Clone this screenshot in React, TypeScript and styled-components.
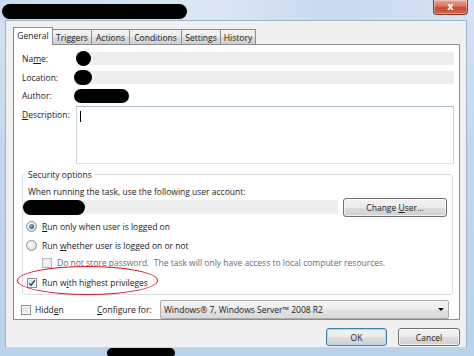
import React from "react";
import styled, { createGlobalStyle } from "styled-components";

const Global = createGlobalStyle`
  html, body { margin: 0; padding: 0; }
  body { font-family: "Open Sans", "Noto Sans", sans-serif; font-size: 8.5px; color: #1b1b1b; }
  * { box-sizing: border-box; }
`;

const Frame = styled.div`
  position: relative;
  width: 474px;
  height: 356px;
  overflow: hidden;
  display: flex;
  flex-direction: column;
  background: linear-gradient(to bottom, #d4e3f3 0%, #c3d8ee 40%, #b9d1ea 100%);
`;

const TitleBar = styled.div`
  height: 20px;
  flex: none;
  display: flex;
  align-items: flex-start;
  justify-content: space-between;
  padding: 0 6px 0 2px;
  background: linear-gradient(to right, #c9dbef 0%, #dbe7f5 45%, #c7daee 70%, #d5e3f3 100%);
`;

const Redaction = styled.div<{ $w: number; $h: number; $mt?: number }>`
  width: ${(p) => p.$w}px;
  height: ${(p) => p.$h}px;
  margin-top: ${(p) => p.$mt ?? 0}px;
  background: #000;
  border-radius: ${(p) => p.$h / 2}px;
  flex: none;
`;

const CloseButton = styled.div`
  width: 35px;
  height: 15px;
  border: 1px solid #8c3a2e;
  border-top: none;
  border-radius: 0 0 4px 4px;
  background: linear-gradient(to bottom, #e9a99b 0%, #d7725d 45%, #c44a2f 55%, #d2664b 100%);
  color: #fff;
  font-family: "DejaVu Sans", sans-serif;
  font-weight: bold;
  font-size: 10px;
  line-height: 13px;
  text-align: center;
  box-shadow: inset 0 0 0 1px rgba(255, 255, 255, 0.35);
`;

const Client = styled.div`
  height: 328px;
  flex: none;
  margin: 0 7px 0 5px;
  background: #f0f0f0;
  border: 1px solid #9eb4cc;
  border-bottom-color: #c8d6e6;
  padding: 6px 6px 0 7px;
  display: flex;
  flex-direction: column;
`;

const TabStrip = styled.div`
  display: flex;
  align-items: flex-end;
  height: 18px;
`;

const Tab = styled.div<{ $active?: boolean; $w: number }>`
  width: ${(p) => p.$w}px;
  height: ${(p) => (p.$active ? 18 : 16)}px;
  border: 1px solid #898c95;
  border-bottom: ${(p) => (p.$active ? "none" : "1px solid #898c95")};
  margin-left: ${(p) => (p.$active ? 0 : -1)}px;
  background: ${(p) =>
    p.$active ? "#fff" : "linear-gradient(to bottom, #f3f3f3 0%, #ebebeb 50%, #dddddd 51%, #cfcfcf 100%)"};
  display: flex;
  align-items: center;
  justify-content: center;
  position: relative;
  z-index: ${(p) => (p.$active ? 2 : 1)};
  padding-bottom: ${(p) => (p.$active ? 2 : 0)}px;
  &:first-child { margin-left: 0; }
`;

const Panel = styled.div`
  width: 447px;
  height: 276px;
  margin-top: -1px;
  border: 1px solid #898c95;
  background: #fff;
  padding: 6px 5px 0 8px;
  display: flex;
  flex-direction: column;
`;

const FieldRow = styled.div<{ $mt: number; $h: number }>`
  display: flex;
  align-items: center;
  height: ${(p) => p.$h}px;
  margin-top: ${(p) => p.$mt}px;
`;

const Label = styled.div`
  width: 54px;
  flex: none;
  white-space: nowrap;
`;

const ReadOnly = styled.div`
  flex: 1;
  height: 100%;
  background: #eeeeee;
  display: flex;
  align-items: center;
`;

const DescRow = styled.div`
  display: flex;
  margin-top: 4px;
  height: 58px;
`;

const DescLabel = styled(Label)`
  padding-top: 3px;
`;

const TextArea = styled.div`
  flex: 1;
  height: 100%;
  border: 1px solid #e2e3ea;
  border-top-color: #a7b7c9;
  border-left-color: #c9d3de;
  border-right-color: #c9d3de;
  background: #fff;
  padding: 4px 3px;
`;

const Caret = styled.div`
  width: 1px;
  height: 11px;
  background: #000;
`;

const Group = styled.fieldset`
  margin: 5px 1px 0 0;
  padding: 0;
  min-width: 0;
  height: 127px;
  border: 1px solid #d5dfe5;
  border-radius: 3px;
  display: flex;
  flex-direction: column;
`;

const Legend = styled.legend`
  margin-left: 3px;
  padding: 0 2px;
  line-height: 12px;
`;

const GroupText = styled.div`
  margin: 5px 0 0 5px;
  white-space: nowrap;
`;

const AccountRow = styled.div`
  display: flex;
  align-items: center;
  margin-top: 1px;
  height: 19px;
  padding-right: 5px;
`;

const AccountField = styled.div`
  width: 315px;
  height: 14px;
  background: #eeeeee;
  display: flex;
  align-items: center;
`;

const Button = styled.div<{ $w: number; $default?: boolean }>`
  width: ${(p) => p.$w}px;
  height: 19px;
  margin-left: auto;
  border: 1px solid ${(p) => (p.$default ? "#3c7fb1" : "#707070")};
  border-radius: 3px;
  background: linear-gradient(to bottom, #f2f2f2 0%, #ebebeb 50%, #dddddd 51%, #cfcfcf 100%);
  box-shadow: inset 0 0 0 1px ${(p) => (p.$default ? "#a9dcf4" : "rgba(255,255,255,0.7)")};
  display: flex;
  align-items: center;
  justify-content: center;
  flex: none;
  white-space: nowrap;
`;

const OptionRow = styled.div<{ $mt: number; $indent: number; $disabled?: boolean }>`
  display: flex;
  align-items: center;
  height: 12px;
  margin-top: ${(p) => p.$mt}px;
  padding-left: ${(p) => p.$indent}px;
  gap: 5px;
  color: ${(p) => (p.$disabled ? "#6d6d6d" : "inherit")};
  white-space: nowrap;
`;

const Radio = styled.div<{ $on?: boolean }>`
  width: 11px;
  height: 11px;
  border-radius: 50%;
  border: 1px solid #8e8f8f;
  background: radial-gradient(circle at 40% 35%, #ffffff 0%, #e3e3e3 60%, #cdcdcd 100%);
  display: flex;
  align-items: center;
  justify-content: center;
  flex: none;
  &::after {
    content: "";
    display: ${(p) => (p.$on ? "block" : "none")};
    width: 5px;
    height: 5px;
    border-radius: 50%;
    background: radial-gradient(circle at 35% 35%, #8fb6d6 0%, #2a5f8a 70%);
  }
`;

const Check = styled.div<{ $disabled?: boolean }>`
  width: 10px;
  height: 10px;
  border: 1px solid ${(p) => (p.$disabled ? "#bdbdbd" : "#8e8f8f")};
  background: ${(p) =>
    p.$disabled ? "#f4f4f4" : "linear-gradient(135deg, #dcdcdc 0%, #f6f6f6 100%)"};
  box-shadow: inset 0 0 0 1px ${(p) => (p.$disabled ? "#e6e6e6" : "#fbfbfb")};
  display: flex;
  align-items: center;
  justify-content: center;
  flex: none;
  svg { display: block; }
`;

const BottomRow = styled.div`
  display: flex;
  align-items: center;
  margin-top: 5px;
  height: 19px;
  padding-right: 5px;
`;

const HiddenBox = styled.div`
  display: flex;
  align-items: center;
  gap: 4px;
  margin-left: -1px;
  width: 76px;
  flex: none;
`;

const ConfigLabel = styled.div`
  width: 63px;
  flex: none;
  white-space: nowrap;
`;

const Select = styled.div`
  flex: 1;
  height: 19px;
  border: 1px solid #acacac;
  border-radius: 2px;
  background: linear-gradient(to bottom, #f4f4f4 0%, #ececec 50%, #e1e1e1 51%, #dadada 100%);
  display: flex;
  align-items: center;
  padding: 0 4px 0 3px;
  white-space: nowrap;
`;

const Arrow = styled.div`
  margin-left: auto;
  width: 0;
  height: 0;
  border-left: 3px solid transparent;
  border-right: 3px solid transparent;
  border-top: 3px solid #111;
`;

const DialogButtons = styled.div`
  display: flex;
  justify-content: flex-end;
  gap: 11px;
  margin-top: 8px;
  padding-right: 0;
`;

const DialogButton = styled(Button)`
  margin-left: 0;
  height: 18px;
`;

const BottomFrame = styled.div`
  flex: 1;
  padding-left: 107px;
  display: flex;
  align-items: flex-end;
`;

const Ellipse = styled.div`
  position: absolute;
  left: 17px;
  top: 266px;
  width: 141px;
  height: 29px;
  border: 1.5px solid #d2182b;
  border-radius: 50%;
  pointer-events: none;
`;

const CheckMark = () => (
  <svg width="8" height="8" viewBox="0 0 8 8">
    <path d="M1.2 4.2 L3 6.3 L6.9 1.2" fill="none" stroke="#2b4f8c" strokeWidth="1.4" />
  </svg>
);

export default function App() {
  return (
    <>
      <Global />
      <Frame>
        <TitleBar>
          <Redaction $w={185} $h={15} $mt={4} />
          <CloseButton>x</CloseButton>
        </TitleBar>
        <Client>
          <TabStrip>
            <Tab $active $w={40}>General</Tab>
            <Tab $w={40}>Triggers</Tab>
            <Tab $w={39}>Actions</Tab>
            <Tab $w={53}>Conditions</Tab>
            <Tab $w={40}>Settings</Tab>
            <Tab $w={36}>History</Tab>
          </TabStrip>
          <Panel>
            <FieldRow $mt={1} $h={13}>
              <Label>
                Na<u>m</u>e:
              </Label>
              <ReadOnly>
                <Redaction $w={15} $h={15} />
              </ReadOnly>
            </FieldRow>
            <FieldRow $mt={6} $h={13}>
              <Label>Location:</Label>
              <ReadOnly>
                <Redaction $w={18} $h={15} style={{ marginLeft: -2 }} />
              </ReadOnly>
            </FieldRow>
            <FieldRow $mt={5} $h={13}>
              <Label>Author:</Label>
              <Redaction $w={55} $h={14} style={{ marginLeft: -2 }} />
            </FieldRow>
            <DescRow>
              <DescLabel>
                <u>D</u>escription:
              </DescLabel>
              <TextArea>
                <Caret />
              </TextArea>
            </DescRow>
            <Group>
              <Legend>Security options</Legend>
              <GroupText>When running the task, use the following user account:</GroupText>
              <AccountRow>
                <AccountField>
                  <Redaction $w={62} $h={15} />
                </AccountField>
                <Button $w={104}>
                  <span>
                    Change <u>U</u>ser...
                  </span>
                </Button>
              </AccountRow>
              <OptionRow $mt={4} $indent={3}>
                <Radio $on />
                <span>
                  <u>R</u>un only when user is logged on
                </span>
              </OptionRow>
              <OptionRow $mt={7} $indent={3}>
                <Radio />
                <span>
                  Run <u>w</u>hether user is logged on or not
                </span>
              </OptionRow>
              <OptionRow $mt={5} $indent={19} $disabled>
                <Check $disabled />
                <span>Do not store password.&nbsp; The task will only have access to local computer resources.</span>
              </OptionRow>
              <OptionRow $mt={8} $indent={4}>
                <Check>
                  <CheckMark />
                </Check>
                <span>
                  Run w<u>i</u>th highest privileges
                </span>
              </OptionRow>
            </Group>
            <BottomRow>
              <HiddenBox>
                <Check />
                <span>
                  Hidd<u>e</u>n
                </span>
              </HiddenBox>
              <ConfigLabel>
                <u>C</u>onfigure for:
              </ConfigLabel>
              <Select>
                <span>Windows® 7, Windows Server™ 2008 R2</span>
                <Arrow />
              </Select>
            </BottomRow>
          </Panel>
          <DialogButtons>
            <DialogButton $w={61} $default>
              OK
            </DialogButton>
            <DialogButton $w={62}>Cancel</DialogButton>
          </DialogButtons>
        </Client>
        <BottomFrame>
          <Redaction $w={68} $h={10} style={{ marginBottom: -2 }} />
        </BottomFrame>
        <Ellipse />
      </Frame>
    </>
  );
}
